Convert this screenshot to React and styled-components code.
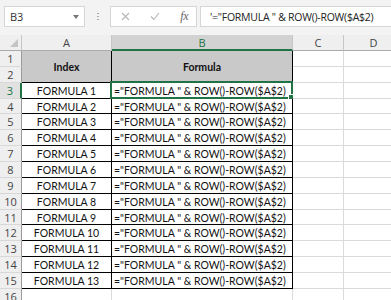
import React from 'react';
import styled, { createGlobalStyle } from 'styled-components';

const GREEN = '#217346';

const Global = createGlobalStyle`
  html, body { margin: 0; padding: 0; background: #fff; }
  body { width: 391px; height: 300px; overflow: hidden; }
`;

const Page = styled.div`
  width: 391px;
  height: 300px;
  overflow: hidden;
  background: #fff;
  display: flex;
  flex-direction: column;
`;

const Toolbar = styled.div`
  height: 35px;
  flex: none;
  background: #f3f3f3;
  display: flex;
  align-items: flex-start;
  padding: 6px 0 0 4px;
  box-sizing: border-box;
`;

const Box = styled.div`
  height: 21px;
  box-sizing: border-box;
  background: #fff;
  border: 1px solid #d6d6d6;
  display: flex;
  align-items: center;
`;

const NameBox = styled(Box)`
  width: 81px;
  justify-content: space-between;
  padding: 0 5px 0 5px;
  font-family: 'Open Sans', sans-serif;
  font-size: 11px;
  color: #333;
`;

const Caret = styled.span`
  width: 0;
  height: 0;
  border-left: 3.5px solid transparent;
  border-right: 3.5px solid transparent;
  border-top: 4px solid #777;
  margin-top: 1px;
`;

const Grip = styled.div`
  width: 25px;
  height: 21px;
  display: flex;
  flex-direction: column;
  align-items: center;
  justify-content: center;
  gap: 2px;
  & > i {
    width: 2px;
    height: 1px;
    background: #a8a8a8;
  }
`;

const Buttons = styled(Box)`
  width: 87px;
  justify-content: space-between;
  padding: 0 8px 0 10px;
`;

const Fx = styled.span`
  font-family: 'Liberation Serif', serif;
  font-style: italic;
  font-size: 12px;
  color: #666;
  letter-spacing: -0.5px;
`;

const FormulaInput = styled(Box)`
  flex: 1;
  margin-left: 3px;
  margin-right: -3px;
  padding-left: 9px;
  font-family: 'Open Sans', sans-serif;
  font-size: 10.5px;
  letter-spacing: -0.25px;
  color: #222;
  white-space: nowrap;
`;

const Sheet = styled.div`
  display: grid;
  grid-template-columns: 22px 90px 181px 51px 60px;
  grid-template-rows: 16px repeat(16, 15.867px);
`;

const Corner = styled.div`
  background: #efefef;
  border-right: 1px solid #c6c6c6;
  border-bottom: 1px solid #ababab;
  box-sizing: border-box;
  position: relative;
  &::after {
    content: '';
    position: absolute;
    right: 3px;
    bottom: 3px;
    width: 0;
    height: 0;
    border-left: 8px solid transparent;
    border-bottom: 8px solid #c4c4c4;
  }
`;

const ColHead = styled.div`
  background: ${p => (p.$sel ? '#d2d2d2' : '#efefef')};
  color: ${p => (p.$sel ? GREEN : '#444')};
  border-right: 1px solid #c6c6c6;
  border-bottom: ${p => (p.$sel ? `2px solid ${GREEN}` : '1px solid #ababab')};
  box-sizing: border-box;
  display: flex;
  align-items: center;
  justify-content: center;
  font-family: 'Open Sans', sans-serif;
  font-size: 11px;
`;

const RowHead = styled.div`
  background: ${p => (p.$sel ? '#e1e1e1' : '#efefef')};
  color: ${p => (p.$sel ? GREEN : '#444')};
  border-right: ${p => (p.$sel ? `2px solid ${GREEN}` : '1px solid #9a9a9a')};
  border-bottom: 1px solid #d8d8d8;
  box-sizing: border-box;
  display: flex;
  align-items: center;
  justify-content: center;
  font-family: 'Open Sans', sans-serif;
  font-size: 11px;
  overflow: hidden;
`;

const Cell = styled.div`
  box-sizing: border-box;
  border-right: 1px solid ${p => (p.$table ? '#000' : '#dadada')};
  border-bottom: 1px solid ${p => (p.$table ? '#000' : '#dadada')};
  background: ${p => (p.$head ? '#c9c9c9' : '#fff')};
  grid-row: ${p => (p.$span ? `span ${p.$span}` : 'auto')};
  display: flex;
  align-items: center;
  justify-content: ${p => (p.$left ? 'flex-start' : 'center')};
  padding-left: ${p => (p.$left ? '2px' : '0')};
  padding-top: 1px;
  font-family: 'Lato', sans-serif;
  font-size: 10.5px;
  font-weight: ${p => (p.$head ? 700 : 400)};
  color: #111;
  white-space: nowrap;
  position: relative;
`;

const Selection = styled.div`
  position: absolute;
  left: -2px;
  top: -2px;
  right: -1px;
  bottom: -1px;
  border: 2px solid ${GREEN};
  pointer-events: none;
  &::after {
    content: '';
    position: absolute;
    right: -4px;
    bottom: -4px;
    width: 5px;
    height: 5px;
    background: ${GREEN};
    border: 1px solid #fff;
  }
`;

const XIcon = () => (
  <svg width="9" height="9" viewBox="0 0 9 9">
    <path d="M1 1L8 8M8 1L1 8" stroke="#b5b5b5" strokeWidth="1.1" fill="none" />
  </svg>
);

const CheckIcon = () => (
  <svg width="10" height="9" viewBox="0 0 10 9">
    <path d="M1 4.5L3.8 7.5L9 1" stroke="#b5b5b5" strokeWidth="1.1" fill="none" />
  </svg>
);

const FORMULA = '="FORMULA " & ROW()-ROW($A$2)';

export default function App() {
  const rows = [];
  for (let r = 1; r <= 16; r++) {
    rows.push(<RowHead key={`h${r}`} $sel={r === 3}>{r}</RowHead>);
    if (r === 1) {
      rows.push(<Cell key="a1" $table $head $span={2}>Index</Cell>);
      rows.push(<Cell key="b1" $table $head $span={2}>Formula</Cell>);
    } else if (r >= 3 && r <= 15) {
      rows.push(<Cell key={`a${r}`} $table>{`FORMULA ${r - 2}`}</Cell>);
      rows.push(
        <Cell key={`b${r}`} $table $left>
          {FORMULA}
          {r === 3 && <Selection />}
        </Cell>
      );
    } else if (r === 16) {
      rows.push(<Cell key="a16" />);
      rows.push(<Cell key="b16" />);
    }
    rows.push(<Cell key={`c${r}`} />);
    rows.push(<Cell key={`d${r}`} />);
  }

  return (
    <Page>
      <Global />
      <Toolbar>
        <NameBox>
          <span>B3</span>
          <Caret />
        </NameBox>
        <Grip>
          <i />
          <i />
          <i />
        </Grip>
        <Buttons>
          <XIcon />
          <CheckIcon />
          <Fx>fx</Fx>
        </Buttons>
        <FormulaInput>{`'${FORMULA}`}</FormulaInput>
      </Toolbar>
      <Sheet>
        <Corner />
        <ColHead>A</ColHead>
        <ColHead $sel>B</ColHead>
        <ColHead>C</ColHead>
        <ColHead>D</ColHead>
        {rows}
      </Sheet>
    </Page>
  );
}
